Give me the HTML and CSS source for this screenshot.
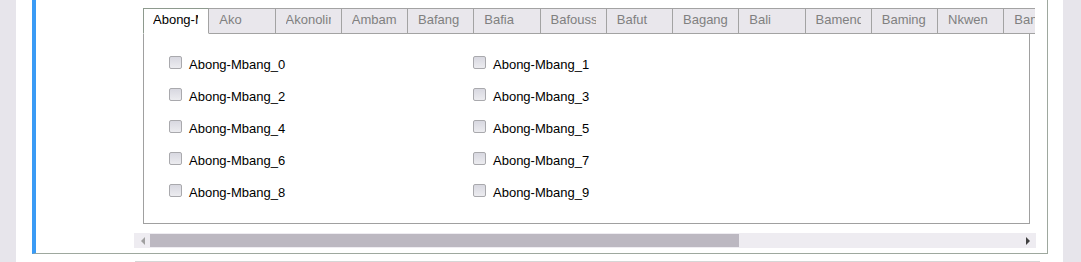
FILE: index.html
```html
<!DOCTYPE html>
<html lang="en">
<head>
    <meta charset="UTF-8" />
    <title>Towns</title>
    <link rel="stylesheet" href="styles.css">
</head>
<body>
    <div class="page">
        <div class="edge"></div>

        <div class="main">
            <section class="panel">
                <div class="scroller">
                    <div class="tabs-widget">
                        <ul class="tab-strip">
                            <li class="tab active"><span>Abong-Mbang</span></li>
                            <li class="tab"><span>Ako</span></li>
                            <li class="tab"><span>Akonolinga</span></li>
                            <li class="tab"><span>Ambam</span></li>
                            <li class="tab"><span>Bafang</span></li>
                            <li class="tab"><span>Bafia</span></li>
                            <li class="tab"><span>Bafoussam</span></li>
                            <li class="tab"><span>Bafut</span></li>
                            <li class="tab"><span>Bagang</span></li>
                            <li class="tab"><span>Bali</span></li>
                            <li class="tab"><span>Bamenda</span></li>
                            <li class="tab"><span>Baming</span></li>
                            <li class="tab"><span>Nkwen</span></li>
                            <li class="tab"><span>Banyo</span></li>
                        </ul>
                        <div class="tab-body">
                            <div class="check-grid">
                                <label class="check"><input type="checkbox"><span>Abong-Mbang_0</span></label>
                                <label class="check"><input type="checkbox"><span>Abong-Mbang_1</span></label>
                                <label class="check"><input type="checkbox"><span>Abong-Mbang_2</span></label>
                                <label class="check"><input type="checkbox"><span>Abong-Mbang_3</span></label>
                                <label class="check"><input type="checkbox"><span>Abong-Mbang_4</span></label>
                                <label class="check"><input type="checkbox"><span>Abong-Mbang_5</span></label>
                                <label class="check"><input type="checkbox"><span>Abong-Mbang_6</span></label>
                                <label class="check"><input type="checkbox"><span>Abong-Mbang_7</span></label>
                                <label class="check"><input type="checkbox"><span>Abong-Mbang_8</span></label>
                                <label class="check"><input type="checkbox"><span>Abong-Mbang_9</span></label>
                            </div>
                        </div>
                    </div>

                    <div class="hscroll">
                        <span class="arrow arrow-left"></span>
                        <span class="thumb"></span>
                        <span class="arrow arrow-right"></span>
                    </div>
                </div>
            </section>
            <div class="next-panel"></div>
        </div>

        <div class="edge edge-right"></div>
    </div>
</body>
</html>
```

FILE: styles.css
```css
body {
    margin: 0;
    font-family: "Liberation Sans", Arial, sans-serif;
    font-size: 13px;
    background-color: #fff;
    color: #000;
}

.page {
    display: flex;
    height: 262px;
    overflow: hidden;
}

.edge {
    flex: none;
    width: 16px;
    background-color: #e7e5eb;
}

.edge-right {
    width: 18px;
    margin-left: 15px;
}

.main {
    flex: none;
    width: 1016px;
    margin-left: 16px;
}

.panel {
    height: 253px;
    padding-left: 98px;
    border-left: 4px solid #3a9bf5;
    border-right: 1px solid #9ea89e;
    border-bottom: 1px solid #9ea89e;
}

.scroller {
    width: 902px;
}

.tabs-widget {
    padding: 8px 0 0 9px;
}

.tab-strip {
    display: flex;
    width: 892px;
    margin: 0;
    padding: 0;
    list-style: none;
    overflow: hidden;
}

.tab {
    flex: 0 0 66.25px;
    min-width: 0;
    box-sizing: border-box;
    padding: 3px 10px 6px;
    line-height: 15px;
    border: 1px solid #a3a3a3;
    border-left: none;
    background-color: #e9e7ec;
    color: #808080;
    overflow: hidden;
}

.tab span {
    display: block;
    overflow: hidden;
    white-space: nowrap;
}

.tab.active {
    padding-left: 9px;
    border-left: 1px solid #8e9a8e;
    border-top-color: #8e9a8e;
    border-bottom-color: #fff;
    background-color: #fff;
    color: #000;
}

.tab-body {
    width: 885px;
    height: 189px;
    border: 1px solid #a0a0a0;
    border-top: none;
}

.check-grid {
    display: grid;
    grid-template-columns: 304px 304px;
    grid-auto-rows: 32px;
    padding: 12px 0 0 25px;
}

.check {
    display: flex;
    align-items: flex-start;
}

.check input {
    appearance: none;
    box-sizing: border-box;
    width: 13px;
    height: 13px;
    margin: 10px 7px 0 0;
    border: 1px solid #a9a9ad;
    border-radius: 2px;
    background: linear-gradient(#d8d8e0, #ececf0);
}

.check span {
    margin-top: 11px;
    line-height: 15px;
}

.hscroll {
    display: flex;
    align-items: center;
    width: 902px;
    height: 15px;
    margin-top: 9px;
    background-color: #eeecf1;
}

.arrow {
    width: 0;
    height: 0;
    border-top: 4px solid transparent;
    border-bottom: 4px solid transparent;
}

.arrow-left {
    margin-left: 7px;
    border-right: 4px solid #a0a0a0;
}

.arrow-right {
    margin-left: auto;
    margin-right: 6px;
    border-left: 4px solid #404040;
}

.thumb {
    width: 589px;
    height: 13px;
    margin-left: 5px;
    background-color: #bcb8c1;
}

.next-panel {
    width: 905px;
    margin: 7px 0 0 103px;
    border-top: 1px solid #d6d6d6;
}
```
